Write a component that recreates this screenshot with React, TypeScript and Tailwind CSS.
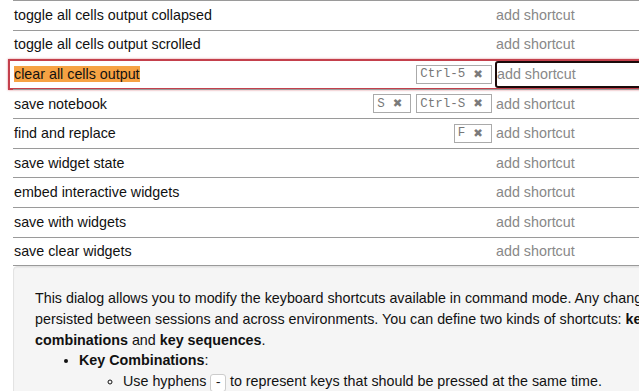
import React from "react";

type Row = { label: string; keys: string[]; selected?: boolean };

const rows: Row[] = [
  { label: "toggle all cells output collapsed", keys: [] },
  { label: "toggle all cells output scrolled", keys: [] },
  { label: "clear all cells output", keys: ["Ctrl-5"], selected: true },
  { label: "save notebook", keys: ["S", "Ctrl-S"] },
  { label: "find and replace", keys: ["F"] },
  { label: "save widget state", keys: [] },
  { label: "embed interactive widgets", keys: [] },
  { label: "save with widgets", keys: [] },
  { label: "save clear widgets", keys: [] },
];

function KeyBox({ k }: { k: string }) {
  return (
    <span className="flex h-[19px] items-center border border-[#aaa] bg-white pl-[3px] pr-[8px] text-[#777]">
      <span className="font-['Liberation_Mono'] text-[12.5px] leading-none">{k}</span>
      <span className="ml-[8px] font-['DejaVu_Sans'] text-[11.5px] leading-none text-[#7a7a7a]">✖</span>
    </span>
  );
}

export default function App() {
  return (
    <div className="h-[391px] w-[639px] overflow-hidden bg-white font-['Liberation_Sans',Arial,sans-serif] text-[14.3px] leading-[20.75px] text-[#111]">
      <div className="ml-[13px] w-[725px]">
        {rows.map((r, i) => (
          <div
            key={i}
            className={`relative flex h-[29.57px] items-center border-t border-[#9a9a9a] ${i === rows.length - 1 ? "border-b" : ""}`}
          >
            {r.selected && (
              <div className="pointer-events-none absolute -left-[5px] -right-[5px] -top-[1px] -bottom-[1px] border-2 border-[#c4404c] shadow-[0_0_2px_rgba(200,60,70,0.6)]" />
            )}
            <div className="flex-1 pl-[1px]">
              {r.selected ? <span className="bg-[#f6a243]">{r.label}</span> : r.label}
            </div>
            <div className="flex items-center gap-[5px]">
              {r.keys.map((k) => (
                <KeyBox key={k} k={k} />
              ))}
            </div>
            <div
              className={`ml-[3px] flex h-[27px] w-[243px] items-center text-[#888] ${
                r.selected ? "rounded-[3px] border-2 border-[#1a0a0a] pl-0" : "border border-transparent pl-0"
              }`}
            >
              add shortcut
            </div>
          </div>
        ))}
        <div className="rounded-[4px] border border-[#e3e3e3] bg-[#f5f5f5] pb-[19px] pl-[21px] pr-[19px] pt-[21px] shadow-[inset_0_1px_1px_rgba(0,0,0,0.05)]">
          <p>
            This dialog allows you to modify the keyboard shortcuts available in command mode. Any changes will be
            persisted between sessions and across environments. You can define two kinds of shortcuts:{" "}
            <b>key combinations</b> and <b>key sequences</b>.
          </p>
          <ul className="list-disc pl-[44px]">
            <li>
              <b>Key Combinations</b>:
              <ul className="list-[circle] pl-[44px]">
                <li>
                  Use hyphens{" "}
                  <kbd className="inline-block rounded-[3px] border border-[#ccc] bg-white px-[3px] font-['Liberation_Mono'] text-[12.5px] leading-[16px]">
                    -
                  </kbd>{" "}
                  to represent keys that should be pressed at the same time.
                </li>
              </ul>
            </li>
          </ul>
        </div>
      </div>
    </div>
  );
}
